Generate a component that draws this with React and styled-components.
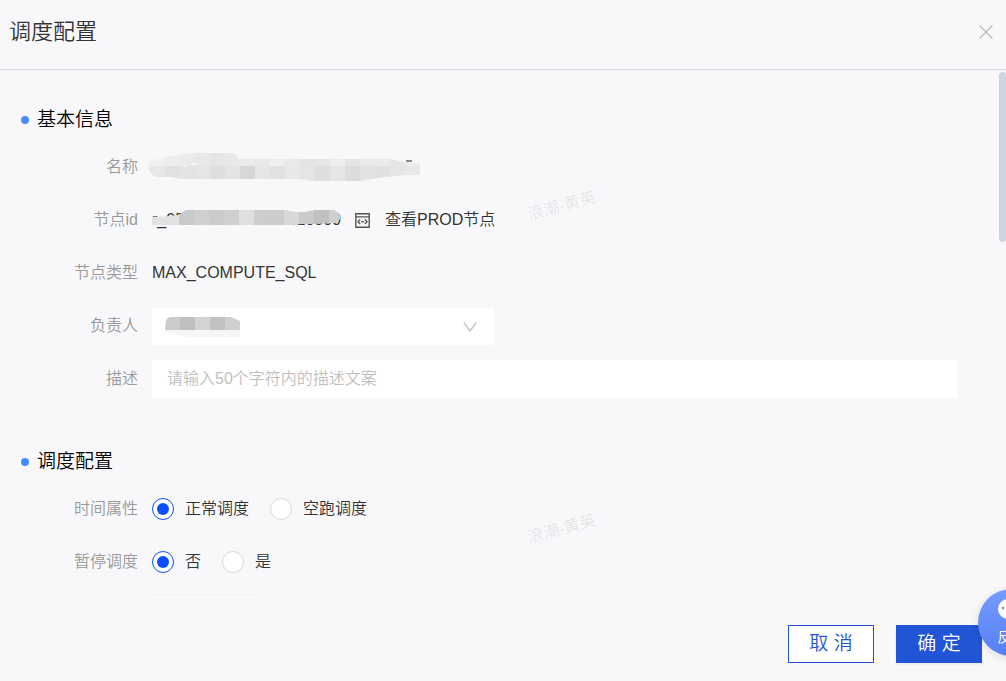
import React, { useState } from 'react'
import { styled, createGlobalStyle, css } from 'styled-components';

const nameTop = [
  [0, '#f0f0f1'], [15, '#ededee'], [30, '#ebebec'], [45, '#e8e8e9'], [60, '#e5e5e6'], [75, '#e8e8e9'],
  [90, '#ebebec'], [105, '#e9e9ea'], [120, '#efeff0'], [135, '#eaeaeb'], [150, '#e4e4e5'], [165, '#e5e5e6'],
  [180, '#ededee'], [195, '#e5e5e6'], [210, '#e9e9ea'], [225, '#ebebec'], [240, '#e6e6e7'], [255, '#ececed'],
];

const nameBottom = [
  [0, '#e7e7e7'], [15, '#e1e1e1'], [30, '#e3e3e2'], [45, '#e5e5e6'], [60, '#dedede'], [75, '#e4e4e5'],
  [90, '#d7d7d7'], [105, '#e6e6e7'], [120, '#e1e1e2'], [135, '#e8e8e7'], [150, '#e5e5e6'], [165, '#dededf'],
  [180, '#e5e5e6'], [195, '#dcdcdc'], [210, '#e2e2e3'], [225, '#e0e0e0'], [240, '#e5e5e6'], [255, '#e8e8e9'],
];

const idBlocks = [
  [0, '#e2e2e3'], [27, '#c9c9c9'], [42, '#d0d0d0'], [57, '#cbcbcb'], [72, '#cfcfcf'], [87, '#dfdfe0'],
  [102, '#cdcdcd'], [117, '#cccccc'], [132, '#d8d8d9'], [147, '#cacaca'], [162, '#c1c1c1'], [177, '#cfcfcf'],
];

const ownerBlocks = [[0, '#cbcbcb'], [15, '#bfbfbf'], [30, '#d3d3d3'], [45, '#c1c1c1'], [60, '#d0d0d0']];

const NameMosaic = () => (
  <svg width="272" height="28" viewBox="0 0 272 28" aria-hidden="true">
    <clipPath id="nameShape">
      <path d="M0 11 L2 8 L18 4 L36 1 L44 0 H84 Q90 1 90 6 H243 L250 8 L264 10 H272 V22 H258 L236 24 L212 28 H164 L150 26 H36 L22 24 H8 Q0 20 0 11Z" />
    </clipPath>
    <g clipPath="url(#nameShape)">
      {nameTop.map(([x, color]) => <rect key={x} x={x ? x + 2 : 0} y="0" width="17" height="13" fill={color} />)}
      {nameBottom.map(([x, color]) => <rect key={x} x={x ? x + 2 : 0} y="13" width="17" height="15" fill={color} />)}
    </g>
    <path d="M35 13h4M43 11h5" stroke="#fafafb" strokeWidth="1.5" />
    <path d="M258 8h6" stroke="#444" strokeWidth="1.2" />
  </svg>
);

const IdMosaic = () => (
  <svg width="188" height="15" viewBox="0 0 188 15" aria-hidden="true">
    <clipPath id="idShape">
      <path d="M0 7 Q14 7 26 5 L34 0 H132 L143 2 H153 L164 0 H182 Q188 3 188 8 Q187 13 182 13 L150 14 L134 15 H0Z" />
    </clipPath>
    <g clipPath="url(#idShape)">
      {idBlocks.map(([x, color]) => <rect key={x} x={x} y="0" width="28" height="15" fill={color} />)}
    </g>
  </svg>
);

const OwnerMosaic = () => (
  <svg width="75" height="20" viewBox="0 0 75 20" aria-hidden="true">
    <clipPath id="ownerShape">
      <path d="M0 13 L1 4 Q2 0 6 0 H66 L75 4 V20 H24 L14 18 L0 16Z" />
    </clipPath>
    <g clipPath="url(#ownerShape)">
      {ownerBlocks.map(([x, color]) => <rect key={x} x={x} y="0" width="15" height="13" fill={color} />)}
      <rect y="13" width="75" height="7" fill="#f6f6f6" />
    </g>
  </svg>
);

const CodeIcon = () => (
  <svg width="15" height="15" viewBox="0 0 15 15" fill="none" stroke="#555" strokeWidth="1.4" aria-hidden="true">
    <path d="M.8 .8H14.2V14.2H.8ZM.8 3.9H14.2" />
    <path d="M5.2 6.6L3 8.8L5.2 11M9.8 6.6L12 8.8L9.8 11M6.2 8.8H8.8" />
  </svg>
);

const RadioRow = ({ label, name, options }) => {
  const [value, setValue] = useState(options[0]);

  return (
    <StRow role="radiogroup" aria-label={label}>
      <StLabel as="span">{label}</StLabel>
      <StRadioGroup>
        {options.map((option) => (
          <StRadioLabel key={option}>
            <StRadio
              type="radio"
              name={name}
              value={option}
              checked={value === option}
              onChange={() => setValue(option)}
            />
            {option}
          </StRadioLabel>
        ))}
      </StRadioGroup>
    </StRow>
  )
}

const App = () => {
  return (
    <>
      <GlobalStyle />
      <StDialog role="dialog" aria-labelledby="dialogTitle">
        <StHeader>
          <StTitle id="dialogTitle">调度配置</StTitle>
          <StCloseBtn type="button" aria-label="关闭">
            <svg width="14" height="14" viewBox="0 0 14 14" stroke="#bfbfbf" strokeWidth="1.4">
              <path d="M.6 .6L13.4 13.4M13.4 .6L.6 13.4" />
            </svg>
          </StCloseBtn>
        </StHeader>

        <StBody>
          <StSection>
            <StSectionTitle>基本信息</StSectionTitle>
            <StRow>
              <StLabel as="span">名称</StLabel>
              <StNameValue><NameMosaic /></StNameValue>
            </StRow>
            <StRow>
              <StLabel as="span">节点id</StLabel>
              <StNodeId>
                <span>r_05</span>
                <span>410000</span>
                <StCover><IdMosaic /></StCover>
              </StNodeId>
              <StNodeLink href="#prod">
                <CodeIcon />
                查看PROD节点
              </StNodeLink>
            </StRow>
            <StRow>
              <StLabel as="span">节点类型</StLabel>
              <span>MAX_COMPUTE_SQL</span>
            </StRow>
            <StRow>
              <StLabel htmlFor="owner">负责人</StLabel>
              <StSelectBox>
                <StSelect id="owner"><option value="owner" aria-label="负责人" /></StSelect>
                <StOwner><OwnerMosaic /></StOwner>
                <StArrow width="14" height="10" viewBox="0 0 14 10" fill="none" stroke="#bfbfbf" strokeWidth="1.3">
                  <path d="M.8 .6L7 9L13.2 .6" />
                </StArrow>
              </StSelectBox>
            </StRow>
            <StRow>
              <StLabel htmlFor="desc">描述</StLabel>
              <StInput id="desc" type="text" placeholder="请输入50个字符内的描述文案" />
            </StRow>
          </StSection>

          <StSection>
            <StSectionTitle>调度配置</StSectionTitle>
            <RadioRow label="时间属性" name="timeType" options={['正常调度', '空跑调度']} />
            <RadioRow label="暂停调度" name="pause" options={['否', '是']} />
            <StRow>
              <StLabel as="span" />
              <StSelectBox $small>
                <StSelect aria-label="调度周期" />
              </StSelectBox>
            </StRow>
          </StSection>

          <StWatermark $top={124}>浪潮-黄英</StWatermark>
          <StWatermark $top={447}>浪潮-黄英</StWatermark>
          <StScrollThumb />
        </StBody>

        <StFooter>
          <StButton type="button">取 消</StButton>
          <StButton type="button" $primary>确 定</StButton>
        </StFooter>
      </StDialog>

      <StFeedback type="button">
        <svg width="28" height="20" viewBox="0 0 28 20" aria-hidden="true">
          <path d="M10 0H18A10 10 0 0 1 18 20H10A10 10 0 0 1 10 0Z" fill="#fff" />
          <circle cx="5" cy="9" r="1.3" fill="#5b86f5" />
          <circle cx="14" cy="9" r="1.3" fill="#5b86f5" />
        </svg>
        反馈
      </StFeedback>
    </>
  )
}

export default App;

const GlobalStyle = createGlobalStyle`
  * {
    box-sizing: border-box;
  }

  body {
    margin: 0;
    overflow: hidden;
    background-color: #f8f8fb;
    color: #333;
    font-family: "Liberation Sans", "Noto Sans CJK SC", sans-serif;
    font-size: 16px;
    font-weight: 350;
    line-height: 24px;
  }

  button, input, select {
    font: inherit;
    color: inherit;
  }
`

const StDialog = styled.main`
  display: flex;
  flex-direction: column;
  height: 100vh;
`

const StHeader = styled.header`
  display: flex;
  justify-content: space-between;
  align-items: center;
  padding: 16px 13px 21px 9px;
  border-bottom: 1px solid #dcdce0;
`

const StTitle = styled.h1`
  margin: 0;
  font-size: 22px;
  font-weight: 350;
  line-height: 32px;
`

const StCloseBtn = styled.button`
  display: flex;
  padding: 0;
  border: none;
  background: none;
  cursor: pointer;
`

const StBody = styled.div`
  position: relative;
  flex: 1;
  min-height: 0;
  overflow: hidden;
  padding: 37px 49px 0 0;
`

const StSection = styled.section`
  display: flex;
  flex-direction: column;
  gap: 15px;
  margin-bottom: 51px;
`

const StSectionTitle = styled.h2`
  display: flex;
  align-items: center;
  gap: 8px;
  margin: 0;
  padding-left: 21px;
  color: #000;
  font-size: 19px;
  font-weight: 350;
  line-height: 26px;

  &::before {
    content: "";
    width: 8px;
    height: 8px;
    border-radius: 50%;
    background-color: #458cff;
  }
`

const StRow = styled.div`
  display: flex;
  align-items: center;
  height: 38px;
`

const StLabel = styled.label`
  flex: none;
  width: 138px;
  margin-right: 14px;
  color: #999;
  text-align: right;
`

const StNameValue = styled.span`
  display: flex;
  margin-left: -4px;
`

const StNodeId = styled.span`
  position: relative;
  display: flex;
  justify-content: space-between;
  width: 189px;
`

const StCover = styled.span`
  position: absolute;
  inset: 2px 0 auto 0;
  display: flex;
`

const StNodeLink = styled.a`
  display: flex;
  align-items: center;
  gap: 15px;
  margin-left: 14px;
  color: inherit;
  text-decoration: none;
`

const StSelectBox = styled.span`
  position: relative;
  align-self: flex-end;
  display: flex;
  align-items: center;
  width: ${(props) => props.$small ? '108px' : '342px'};
  height: 37px;
`

const StSelect = styled.select`
  width: 100%;
  height: 100%;
  border: none;
  background-color: #fff;
  appearance: none;
`

const StOwner = styled.span`
  position: absolute;
  left: 13px;
  display: flex;
  pointer-events: none;
`

const StArrow = styled.svg`
  position: absolute;
  right: 17px;
  pointer-events: none;
`

const StInput = styled.input`
  flex: 1;
  min-width: 0;
  height: 38px;
  padding: 0 15px;
  border: none;
  background-color: #fff;

  &::placeholder {
    color: #bfbfbf;
  }
`

const StRadioGroup = styled.div`
  display: flex;
  gap: 21px;
`

const StRadioLabel = styled.label`
  display: flex;
  align-items: center;
  gap: 11px;
`

const StRadio = styled.input`
  display: grid;
  place-items: center;
  width: 22px;
  height: 22px;
  margin: 0;
  border: 1px solid #d9d9d9;
  border-radius: 50%;
  background-color: #fff;
  appearance: none;

  &:checked {
    border-color: #0d4fff;
  }

  &:checked::before {
    content: "";
    width: 12px;
    height: 12px;
    border-radius: 50%;
    background-color: #0d4fff;
  }
`

const StWatermark = styled.span`
  position: absolute;
  top: ${(props) => props.$top}px;
  left: 527px;
  color: rgba(0, 0, 0, 0.09);
  font-weight: 400;
  transform: rotate(-15deg);
  pointer-events: none;
`

const StScrollThumb = styled.span`
  position: absolute;
  top: 2px;
  right: 0;
  width: 7px;
  height: 170px;
  border-radius: 4px;
  background-color: #d0d3e0;
`

const StFooter = styled.footer`
  display: flex;
  justify-content: flex-end;
  gap: 22px;
  padding: 27px 24px 18px;
`

const StButton = styled.button`
  width: 86px;
  height: 38px;
  padding: 0;
  border: 1px solid #2254d6;
  background-color: #fff;
  color: #2254d6;
  font-size: 19px;
  cursor: pointer;

  ${(props) => props.$primary && css`
    background-color: #2254d6;
    color: #fff;
    box-shadow: 0 2px 2px rgba(0, 0, 0, 0.05);
  `}
`

const StFeedback = styled.button`
  position: fixed;
  right: -39px;
  bottom: 25px;
  display: flex;
  flex-direction: column;
  align-items: center;
  justify-content: center;
  gap: 8px;
  width: 67px;
  height: 67px;
  padding: 0;
  border: none;
  border-radius: 50%;
  background: linear-gradient(#779cff, #5580f2);
  box-shadow: 0 2px 10px rgba(0, 0, 0, 0.12);
  color: #fff;
  font-size: 14px;
  font-weight: 400;
  line-height: 20px;
`
